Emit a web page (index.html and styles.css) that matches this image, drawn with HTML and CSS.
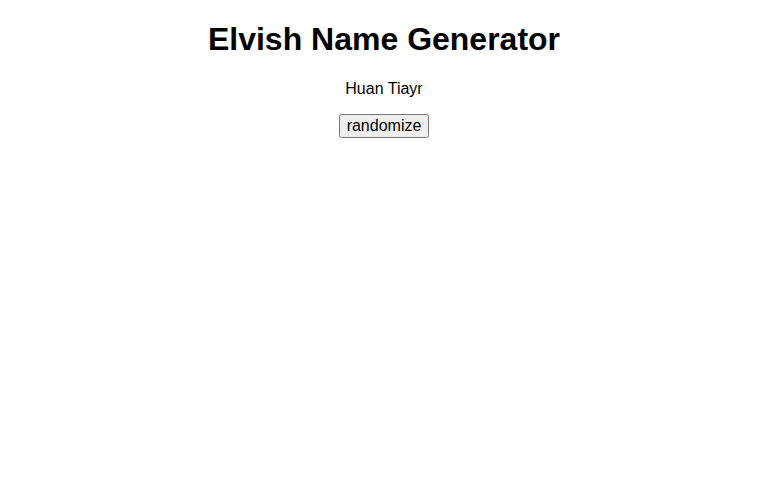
FILE: index.html
```html
<!DOCTYPE html>
<html lang="en">
<head>
    <meta charset="UTF-8">
    <meta name="viewport" content="width=device-width, initial-scale=1.0">
    <title>Elvish Name Generator</title>
    <link rel="stylesheet" href="styles.css">
</head>
<body>
    <div class="app">
        <h1>Elvish Name Generator</h1>
        <p class="name" id="name">Huan Tiayr</p>
        <button class="randomize" onclick="randomize()">randomize</button>
    </div>

    <script>
        const firsts = ['Huan', 'Aerin', 'Elros', 'Faelar', 'Ithil', 'Luthien', 'Mirel', 'Thranduil'];
        const lasts = ['Tiayr', 'Galion', 'Nimloth', 'Silmar', 'Erethor', 'Aelindra', 'Vanya'];

        function pick(list) {
            return list[Math.floor(Math.random() * list.length)];
        }

        function randomize() {
            document.getElementById('name').textContent = pick(firsts) + ' ' + pick(lasts);
        }
    </script>
</body>
</html>
```

FILE: styles.css
```css
body {
    margin: 0;
    font-family: "Liberation Sans", Arial, sans-serif;
    background: #fff;
    color: #000;
}

.app {
    text-align: center;
}

h1 {
    font-size: 32px;
    margin: 0.67em 0;
}

.name {
    font-size: 16px;
    margin: 1em 0;
}

.randomize {
    font-family: inherit;
    font-size: 16px;
}
```
